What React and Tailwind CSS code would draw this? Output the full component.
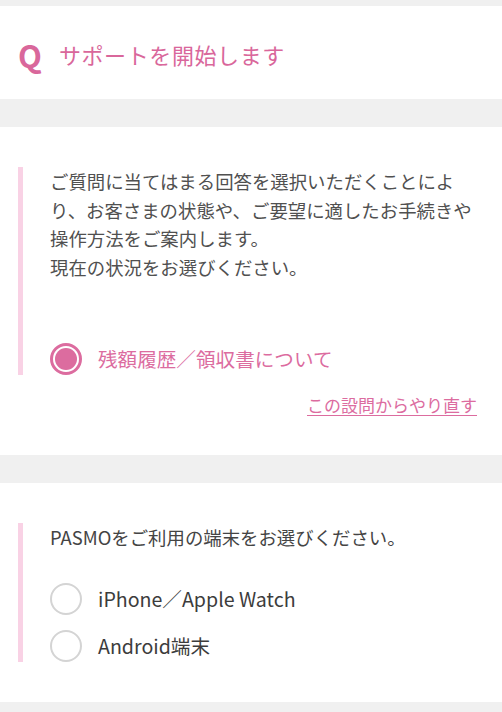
import React, { useState } from 'react';

const font = { fontFamily: '"Noto Sans CJK JP", "Noto Sans", sans-serif' };

const Radio = ({ checked, label, onClick }) => (
  <button type="button" onClick={onClick} className="flex items-center text-left">
    {checked ? (
      <span className="w-[32px] h-[32px] rounded-full border-[3px] border-[#dc6c9f] flex items-center justify-center">
        <span className="w-[22px] h-[22px] rounded-full bg-[#dc6c9f]"></span>
      </span>
    ) : (
      <span className="w-[32px] h-[32px] rounded-full border-2 border-[#d4d4d4]"></span>
    )}
    <span className={`ml-[16px] text-[19.6px] leading-[28px] ${checked ? 'text-[#dc6c9f]' : 'text-[#3c3c3c]'}`}>
      {label}
    </span>
  </button>
);

const App = () => {
  const [device, setDevice] = useState('');

  return (
    <div className="bg-[#f0f0f0] min-h-[712px] pt-[6px] pb-[10px]" style={font}>
      {/* header card */}
      <div className="bg-white h-[93px] flex items-center pl-[18px] pt-[4px]">
        <span className="text-[31px] font-bold text-[#d9679b] leading-none">Q</span>
        <span className="ml-[17px] text-[22px] tracking-[0.6px] text-[#d9679b]">サポートを開始します</span>
      </div>

      {/* question 1 */}
      <div className="bg-white mt-[28px] pt-[40px] pb-[38px] pr-[25px]">
        <div className="ml-[18px] border-l-[5px] border-[#f9d2e5] pl-[27px]">
          <p className="text-[18.4px] leading-[28.5px] text-[#505050]">
            ご質問に当てはまる回答を選択いただくことにより、お客さまの状態や、ご要望に適したお手続きや操作方法をご案内します。
            <br />
            現在の状況をお選びください。
          </p>
          <div className="mt-[62px]">
            <Radio checked label="残額履歴／領収書について" />
          </div>
        </div>
        <div className="flex justify-end mt-[18px]">
          <a href="#" className="text-[17px] leading-[24px] text-[#dc6c9f] underline underline-offset-[3px]">
            この設問からやり直す
          </a>
        </div>
      </div>

      {/* question 2 */}
      <div className="bg-white mt-[28px] pt-[40px] pb-[40px] pr-[25px]">
        <div className="ml-[18px] border-l-[5px] border-[#f9d2e5] pl-[27px]">
          <p className="text-[18.4px] leading-[28px] text-[#444]">PASMOをご利用の端末をお選びください。</p>
          <div className="mt-[32px] flex flex-col gap-[15px]">
            <Radio
              checked={device === 'ios'}
              label="iPhone／Apple Watch"
              onClick={() => setDevice('ios')}
            />
            <Radio
              checked={device === 'android'}
              label="Android端末"
              onClick={() => setDevice('android')}
            />
          </div>
        </div>
      </div>
    </div>
  );
};

export default App;
